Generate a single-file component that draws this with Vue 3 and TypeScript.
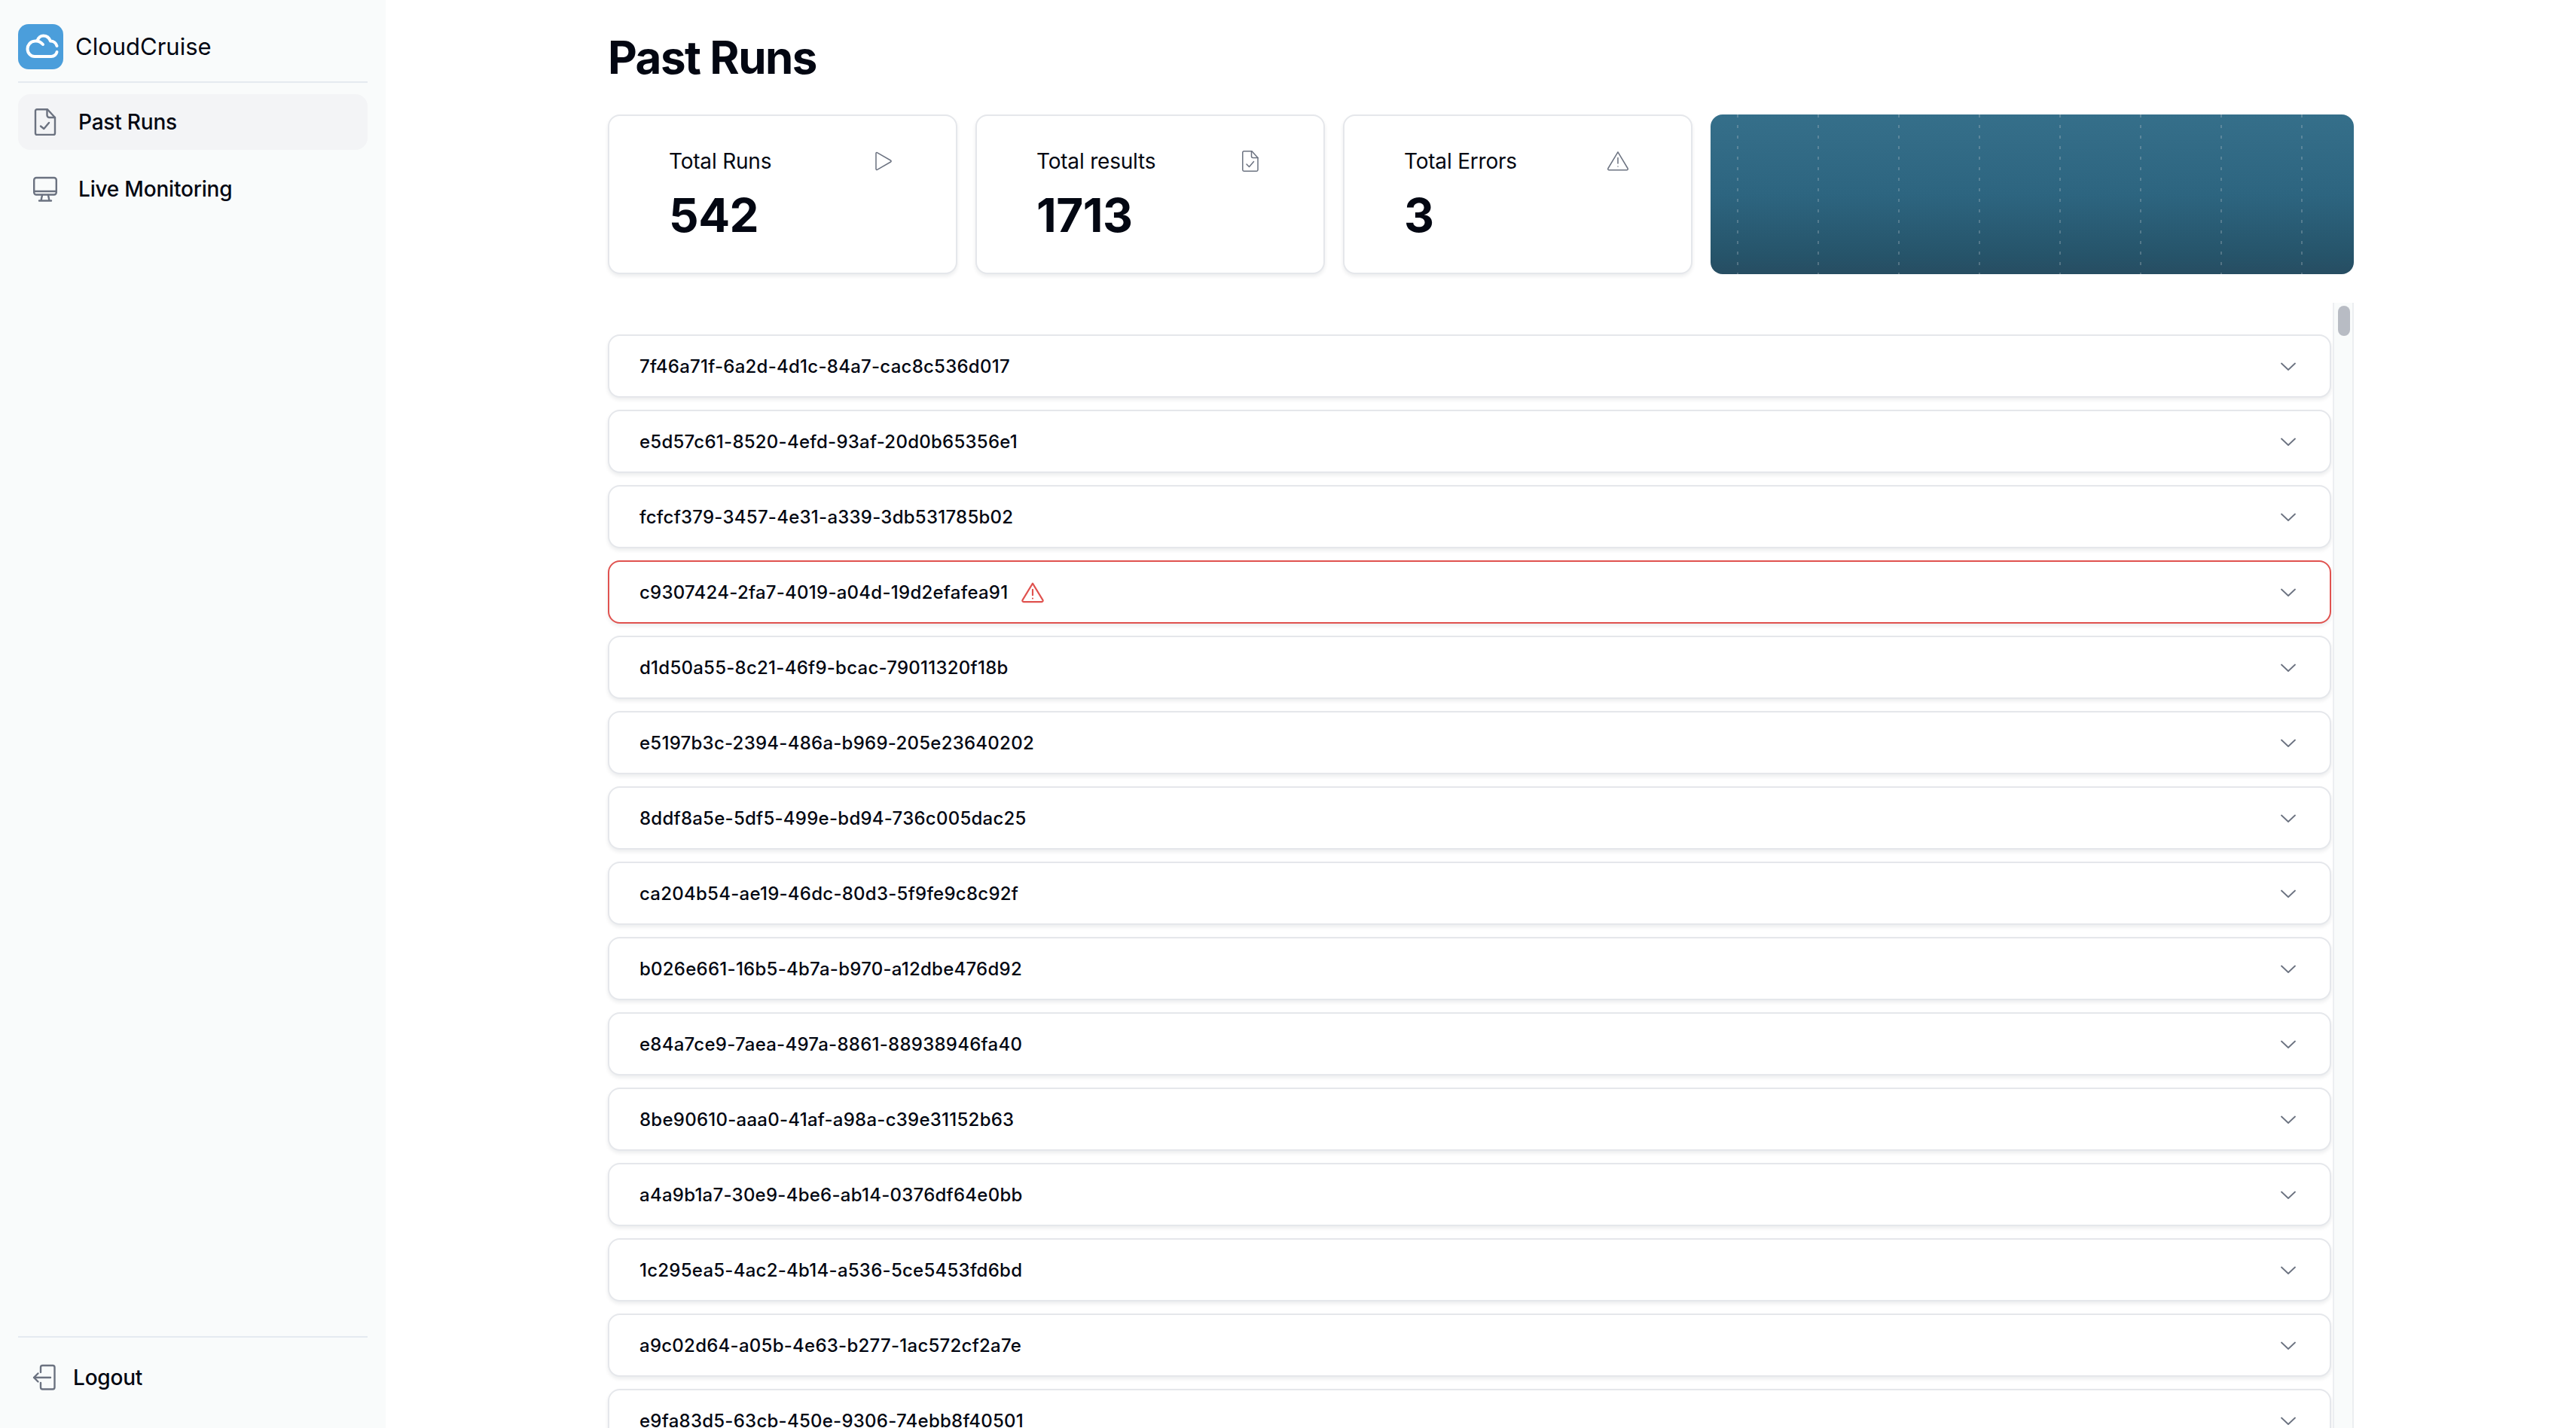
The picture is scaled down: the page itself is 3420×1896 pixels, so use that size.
<template>
  <div class="layout">
    <aside class="sidebar">
      <div class="brand">
        <div class="brand-logo">
          <svg viewBox="0 0 60 60" width="60" height="60" fill="none" stroke="#fff" stroke-width="4" stroke-linecap="round" stroke-linejoin="round">
            <path d="M33 27 C30 23.500 26 22 22.500 22.500 C16 23 12.500 28 12.500 33 C12.500 38.500 17 43 22 43 H44 C48 43 51 40 51.500 37" />
            <path d="M25.500 22 C27 18 30 15.500 33.500 15.500 C38 15.500 41.500 18.500 43 22.500 C47 22.500 50.500 25.500 51.500 29" />
          </svg>
        </div>
        <span class="brand-name">CloudCruise</span>
      </div>

      <nav class="nav">
        <a class="nav-item active">
          <svg class="nav-icon" viewBox="0 0 32 36" fill="none" stroke="#6b7280" stroke-width="2.400" stroke-linecap="round" stroke-linejoin="round">
            <path d="M5 1.200 H19 L29 12 V33 A2 2 0 0 1 27 35 H5 A2 2 0 0 1 3 33 V3.200 A2 2 0 0 1 5 1.200 Z" />
            <path d="M18.500 1.200 V9 A3 3 0 0 0 21.500 12 H29" />
            <path d="M10 23.500 L14.300 27 L21 19" />
          </svg>
          <span>Past Runs</span>
        </a>
        <a class="nav-item">
          <svg class="nav-icon" viewBox="0 0 32 36" fill="none" stroke="#6b7280" stroke-width="2.400" stroke-linecap="round" stroke-linejoin="round">
            <rect x="1.200" y="3" width="29.600" height="22.500" rx="3" />
            <path d="M1.200 21 H30.800 M12 26 L10.500 33.500 M20 26 L21.500 33.500 M8 33.500 H24" />
          </svg>
          <span>Live Monitoring</span>
        </a>
      </nav>

      <div class="sidebar-foot">
        <a class="logout">
          <svg class="logout-icon" viewBox="0 0 32 36" fill="none" stroke="#6b7280" stroke-width="2.400" stroke-linecap="round" stroke-linejoin="round">
            <path d="M11 11 V4.500 A2.500 2.500 0 0 1 13.500 2 H27 A2.500 2.500 0 0 1 29.500 4.500 V31 A2.500 2.500 0 0 1 27 33.500 H13.500 A2.500 2.500 0 0 1 11 31 V25" />
            <path d="M2 18 H24 M2 18 L7.500 12.500 M2 18 L7.500 23.500" />
          </svg>
          <span>Logout</span>
        </a>
      </div>
    </aside>

    <main class="main">
      <div class="content">
        <h1 class="page-title">Past Runs</h1>

        <section class="stats">
          <div v-for="s in stats" :key="s.label" class="stat-card">
            <div class="stat-head">
              <span class="stat-label">{{ s.label }}</span>
              <svg class="stat-icon" viewBox="0 0 28 28" fill="none" stroke="#6b7280" stroke-width="1.500" stroke-linecap="round" stroke-linejoin="round">
                <template v-if="s.icon === 'play'">
                  <path d="M5 3.500 A1 1 0 0 1 6.500 2.700 L24.500 13 A1.100 1.100 0 0 1 24.500 15 L6.500 25.300 A1 1 0 0 1 5 24.500 Z" />
                </template>
                <template v-else-if="s.icon === 'file'">
                  <path d="M5.500 0.800 H16 L24 9.500 V25.500 A1.700 1.700 0 0 1 22.300 27.200 H5.500 A1.700 1.700 0 0 1 3.800 25.500 V2.500 A1.700 1.700 0 0 1 5.500 0.800 Z" />
                  <path d="M15.500 0.800 V7.500 A2 2 0 0 0 17.500 9.500 H24" />
                  <path d="M9 18 L12.500 21.500 L18.500 14.500" />
                </template>
                <template v-else>
                  <path d="M14 1.800 L27 23.500 A1.500 1.500 0 0 1 25.700 25.800 H2.300 A1.500 1.500 0 0 1 1 23.500 Z" />
                  <path d="M14 9.500 V17 M14 21 V21.100" />
                </template>
              </svg>
            </div>
            <div class="stat-value">{{ s.value }}</div>
          </div>

          <div class="banner">
            <div class="banner-lines">
              <span v-for="n in 8" :key="n" class="banner-line"></span>
            </div>
          </div>
        </section>

        <section class="runs">
          <div class="run-list">
            <div v-for="r in runs" :key="r.id" class="run-row" :class="{ error: r.error }">
              <div class="run-id">
                <span>{{ r.id }}</span>
                <svg v-if="r.error" class="run-warn" viewBox="0 0 28 28" fill="none" stroke="#e0524f" stroke-width="2" stroke-linecap="round" stroke-linejoin="round">
                  <path d="M14 2.500 L26.500 23 A1.500 1.500 0 0 1 25.200 25.300 H2.800 A1.500 1.500 0 0 1 1.500 23 Z" />
                  <path d="M14 10 V17 M14 21 V21.100" />
                </svg>
              </div>
              <svg class="chevron" viewBox="0 0 20 12" fill="none" stroke="#6b7280" stroke-width="1.800" stroke-linecap="round" stroke-linejoin="round">
                <path d="M1 1.500 L10 10 L19 1.500" />
              </svg>
            </div>
          </div>
          <div class="scroll-track">
            <div class="scroll-thumb"></div>
          </div>
        </section>
      </div>
    </main>
  </div>
</template>

<script setup lang="ts">
interface Stat {
  label: string;
  value: number;
  icon: "play" | "file" | "warn";
}

interface Run {
  id: string;
  error?: boolean;
}

const stats: Stat[] = [
  { label: "Total Runs", value: 542, icon: "play" },
  { label: "Total results", value: 1713, icon: "file" },
  { label: "Total Errors", value: 3, icon: "warn" }
];

const runs: Run[] = [
  { id: "7f46a71f-6a2d-4d1c-84a7-cac8c536d017" },
  { id: "e5d57c61-8520-4efd-93af-20d0b65356e1" },
  { id: "fcfcf379-3457-4e31-a339-3db531785b02" },
  { id: "c9307424-2fa7-4019-a04d-19d2efafea91", error: true },
  { id: "d1d50a55-8c21-46f9-bcac-79011320f18b" },
  { id: "e5197b3c-2394-486a-b969-205e23640202" },
  { id: "8ddf8a5e-5df5-499e-bd94-736c005dac25" },
  { id: "ca204b54-ae19-46dc-80d3-5f9fe9c8c92f" },
  { id: "b026e661-16b5-4b7a-b970-a12dbe476d92" },
  { id: "e84a7ce9-7aea-497a-8861-88938946fa40" },
  { id: "8be90610-aaa0-41af-a98a-c39e31152b63" },
  { id: "a4a9b1a7-30e9-4be6-ab14-0376df64e0bb" },
  { id: "1c295ea5-4ac2-4b14-a536-5ce5453fd6bd" },
  { id: "a9c02d64-a05b-4e63-b277-1ac572cf2a7e" },
  { id: "e9fa83d5-63cb-450e-9306-74ebb8f40501" }
];
</script>

<style>
html,
body {
  margin: 0;
  height: 100%;
  overflow: hidden;
  background: #fff;
}
</style>

<style scoped>
.layout {
  display: flex;
  height: 1896px;
  overflow: hidden;
  font-family: Inter, "Liberation Sans", sans-serif;
  color: #030712;
}

/* sidebar */

.sidebar {
  width: 512px;
  flex-shrink: 0;
  box-sizing: border-box;
  padding: 0 24px;
  display: flex;
  flex-direction: column;
  background: #f9fbfb;
}

.brand {
  display: flex;
  align-items: center;
  gap: 16px;
  height: 110px;
  padding-top: 15px;
  box-sizing: border-box;
  border-bottom: 2px solid #e5eaf0;
}

.brand-logo {
  width: 60px;
  height: 60px;
  border-radius: 14px;
  background: #4b9edb;
  display: flex;
  align-items: center;
  justify-content: center;
  overflow: hidden;
}

.brand-name {
  font-size: 31px;
  line-height: 40px;
}

.nav {
  display: flex;
  flex-direction: column;
  gap: 15px;
  margin-top: 15px;
}

.nav-item {
  display: flex;
  align-items: center;
  gap: 28px;
  height: 74px;
  padding: 0 20px;
  border-radius: 16px;
  font-size: 28px;
  font-weight: 500;
  letter-spacing: -0.2px;
}

.nav-item.active {
  background: #f3f4f6;
}

.nav-icon {
  width: 32px;
  height: 36px;
  flex-shrink: 0;
}

.sidebar-foot {
  margin-top: auto;
  border-top: 2px solid #e5eaf0;
  height: 122px;
  box-sizing: border-box;
  padding: 23px 19px 0;
}

.logout {
  display: flex;
  align-items: center;
  gap: 22px;
  height: 60px;
  font-size: 28px;
  font-weight: 500;
  letter-spacing: -0.2px;
}

.logout-icon {
  width: 32px;
  height: 36px;
}

/* main */

.main {
  flex: 1;
  display: flex;
  justify-content: center;
  min-width: 0;
}

.content {
  width: 2318px;
}

.page-title {
  margin: 0;
  height: 152px;
  box-sizing: border-box;
  padding-top: 40px;
  font-size: 60px;
  line-height: 72px;
  font-weight: 700;
  letter-spacing: -1.500px;
}

.stats {
  display: grid;
  grid-template-columns: 464px 464px 464px 1fr;
  gap: 24px;
  height: 212px;
}

.stat-card {
  box-sizing: border-box;
  border: 2px solid #e5e7eb;
  border-radius: 16px;
  background: #fff;
  box-shadow: 0 3px 5px rgba(17, 24, 39, 0.08);
  padding: 42px 83px 0 79px;
}

.stat-head {
  display: flex;
  align-items: center;
  justify-content: space-between;
  height: 36px;
}

.stat-label {
  font-size: 28px;
  font-weight: 400;
  letter-spacing: -0.2px;
}

.stat-icon {
  width: 28px;
  height: 28px;
}

.stat-value {
  margin-top: 16px;
  font-size: 62px;
  line-height: 76px;
  font-weight: 700;
  letter-spacing: -0.5px;
}

.banner {
  position: relative;
  border-radius: 16px;
  overflow: hidden;
  background: linear-gradient(180deg, #356f8a 0%, #336c87 15%, #2d6580 50%, #26546a 88%, #274d62 100%);
}

.banner-lines {
  position: absolute;
  inset: 0;
  display: flex;
  padding-left: 35px;
}

.banner-line {
  width: 107px;
  flex-shrink: 0;
  background: repeating-linear-gradient(180deg, rgba(200, 205, 210, 0.28) 0 4px, transparent 4px 14px) left top / 2px 100% no-repeat;
}

.runs {
  display: flex;
  gap: 2px;
  margin-top: 38px;
}

.run-list {
  flex: 1;
  min-width: 0;
  display: flex;
  flex-direction: column;
  gap: 16px;
  padding-top: 42px;
}

.run-row {
  box-sizing: border-box;
  height: 84px;
  flex-shrink: 0;
  display: flex;
  align-items: center;
  justify-content: space-between;
  padding: 1px 45px 0 40px;
  background: #fff;
  border: 2px solid #e5e7eb;
  border-radius: 16px;
  box-shadow: 0 3px 5px rgba(17, 24, 39, 0.08);
}

.run-row.error {
  border-color: #e0524f;
}

.run-id {
  display: flex;
  align-items: center;
  gap: 18px;
  font-size: 24px;
  font-weight: 500;
  letter-spacing: 0.25px;
}

.run-warn {
  width: 30px;
  height: 30px;
}

.chevron {
  width: 20px;
  height: 12px;
}

.scroll-track {
  position: relative;
  width: 28px;
  flex-shrink: 0;
  box-sizing: border-box;
  height: 1500px;
  background: #f9fbfb;
  border-left: 2px solid #eceef1;
  border-right: 2px solid #eceef1;
}

.scroll-thumb {
  position: absolute;
  top: 4px;
  left: 5px;
  width: 16px;
  height: 40px;
  border-radius: 8px;
  background: #b8bcc4;
}
</style>
